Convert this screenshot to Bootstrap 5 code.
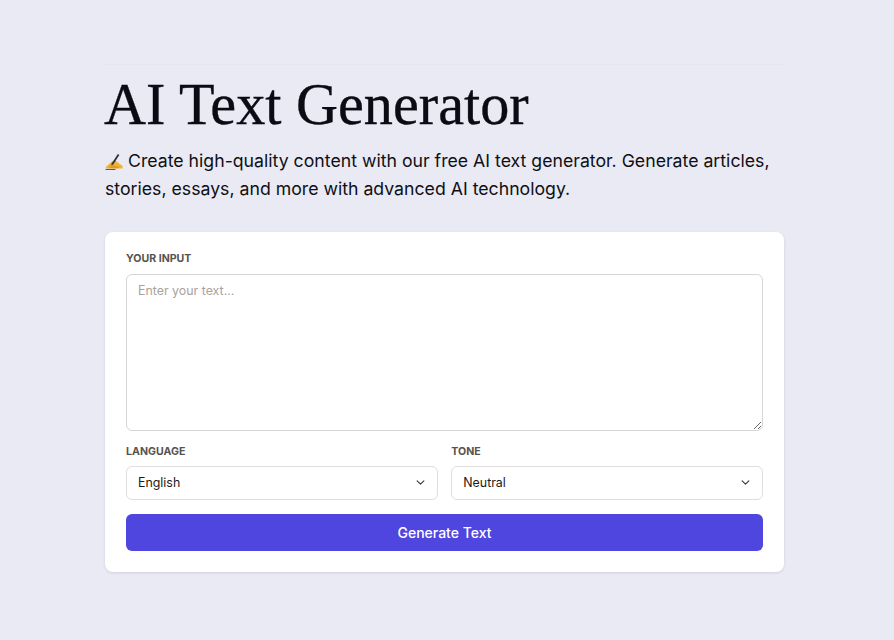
<!DOCTYPE html>
<html lang="en">
<head>
<meta charset="utf-8">
<title>AI Text Generator</title>
<link href="https://cdn.jsdelivr.net/npm/bootstrap@5.3.0/dist/css/bootstrap.min.css" rel="stylesheet">
<style>
html,body{height:100%}
body{background:#e9eaf4;font-family:Inter,"Liberation Sans",sans-serif;color:#111;overflow:hidden}
.page-wrap{width:679px;margin-left:105px;padding-top:63.5px}
.top-rule{height:1px;background:#e4e5ef}
.page-title{font-family:"Liberation Serif",serif;font-size:58.2px;font-weight:400;line-height:80px;margin:0 0 0 -1px;color:#0b0b14;height:80px;-webkit-text-stroke:.35px #0b0b14}
.page-lead{font-size:17.7px;line-height:28.5px;margin:0 0 28px;color:#101014;padding-top:2px}
.page-lead svg{vertical-align:-3px;margin-right:5px}
.gen-card{border:0;border-radius:8px;box-shadow:0 1px 3px rgba(30,30,60,.12);padding:21px}
.gen-label{display:block;font-size:10.6px;font-weight:700;text-transform:uppercase;line-height:12px;color:#57534e;margin:0 0 9px}
.gen-row .gen-label{margin-bottom:8px}
.gen-text{height:157px;font-size:12.4px;padding:7px 11px;border:1px solid #d8d6d3;border-radius:6px;display:block;box-shadow:none}
.gen-text::placeholder{color:#a8a29e}
.gen-select{height:34px;font-size:12.4px;padding:2px 11px 0;border:1px solid #e0dedc;border-radius:6px;color:#1c1917;background-position:right 11px center;background-size:11px 9px}
.gen-row{column-gap:13.5px;margin-top:15px}
.gen-btn{height:37px;margin-top:14px;background:#4f46e0;border:0;border-radius:6px;color:#fff;font-size:14px;font-weight:500;padding:0}
.gen-btn:hover{background:#4f46e0;color:#fff}
</style>
</head>
<body>
<main class="page-wrap">
<div class="top-rule"></div>
<h1 class="page-title">AI Text Generator</h1>
<p class="page-lead"><svg width="18" height="16" viewBox="0 0 18 16" aria-hidden="true"><path d="M.5 15.4h10" stroke="#4a4a4a" stroke-width="1" fill="none"/><path d="M.5 13.2 7 7.2l3.4-.6 4.4 3.4 3 2-.5 2.6H2z" fill="#f2b233"/><path d="M6.8 11 13.6.6" stroke="#2f2f33" stroke-width="1.8" fill="none"/><path d="M3.5 14 7 10.5l3 1.5 4.5.8-1 1.4z" fill="#e39a1f"/></svg>Create high-quality content with our free AI text generator. Generate articles, stories, essays, and more with advanced AI technology.</p>
<form class="card gen-card">
<label class="gen-label" for="inputText">Your Input</label>
<textarea class="form-control gen-text" id="inputText" placeholder="Enter your text..."></textarea>
<div class="d-flex gen-row">
<div class="flex-fill w-50">
<label class="gen-label" for="langSel">Language</label>
<select class="form-select gen-select" id="langSel"><option>English</option></select>
</div>
<div class="flex-fill w-50">
<label class="gen-label" for="toneSel">Tone</label>
<select class="form-select gen-select" id="toneSel"><option>Neutral</option></select>
</div>
</div>
<button type="button" class="btn w-100 gen-btn">Generate Text</button>
</form>
</main>
<script src="https://cdn.jsdelivr.net/npm/bootstrap@5.3.0/dist/js/bootstrap.bundle.min.js"></script>
</body>
</html>
